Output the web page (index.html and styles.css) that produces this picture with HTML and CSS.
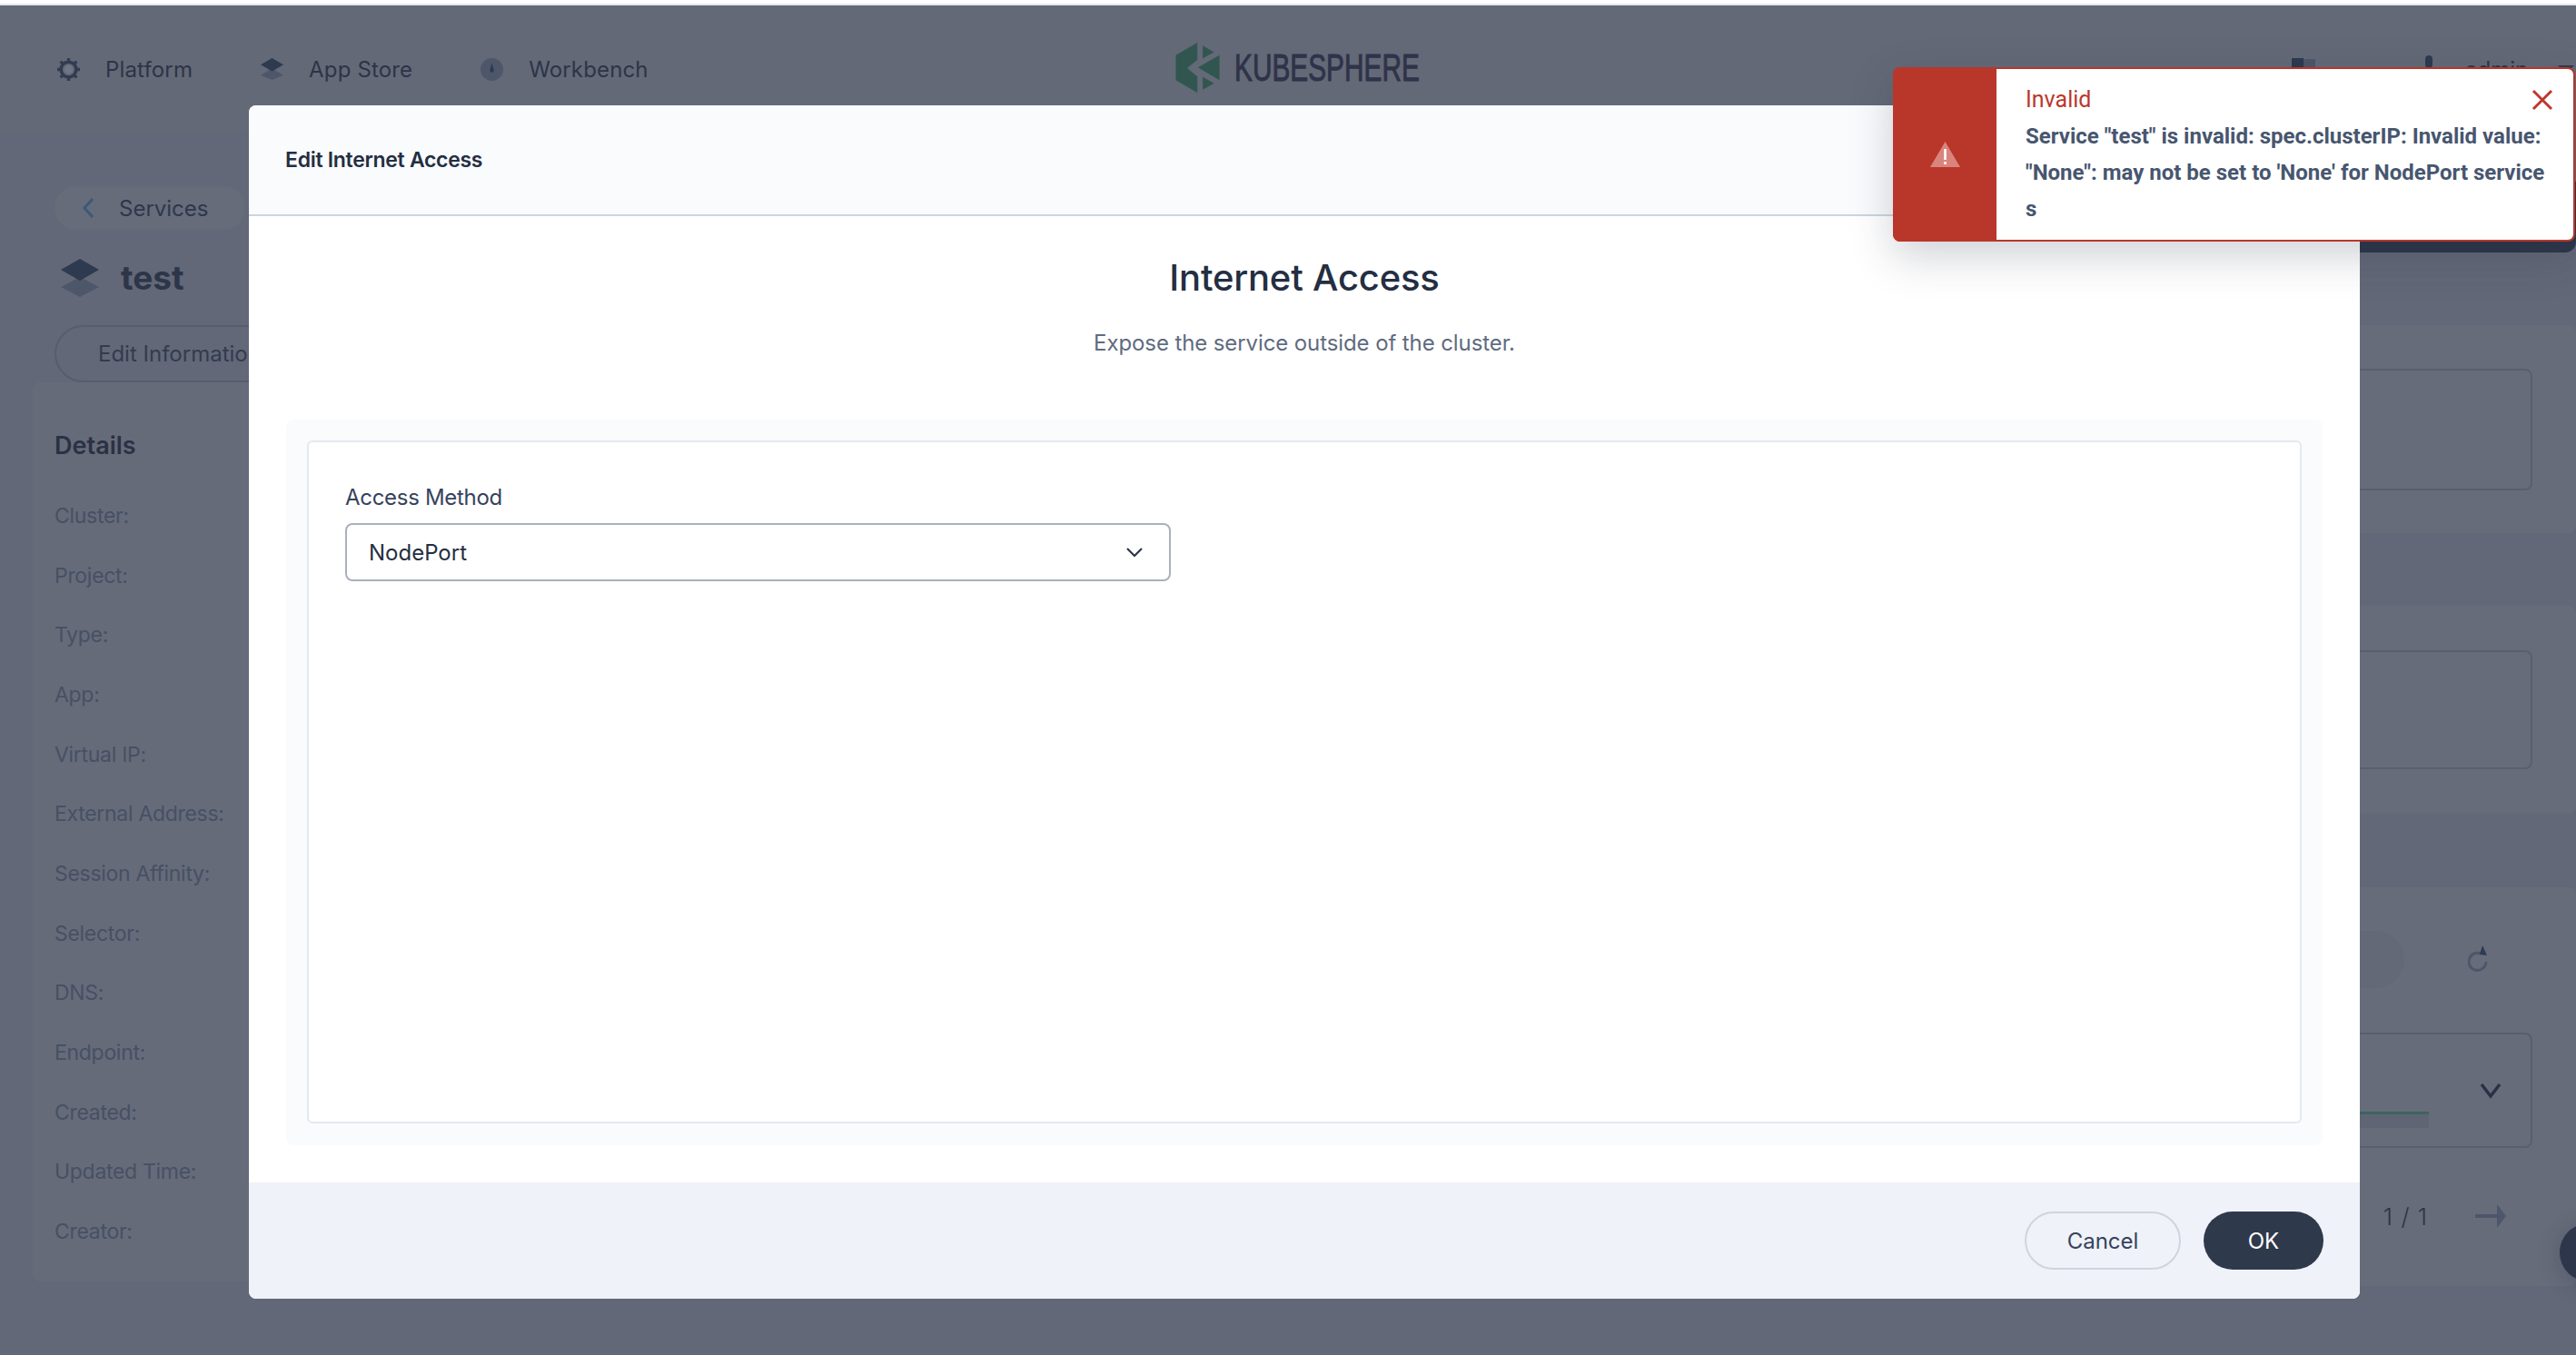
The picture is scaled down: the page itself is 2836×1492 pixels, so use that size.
FILE: index.html
```html
<!DOCTYPE html>
<html lang="en">
<head>
<meta charset="utf-8">
<title>Edit Internet Access</title>
<link rel="stylesheet" href="styles.css">
</head>
<body>
<div class="topline"></div>
<div class="app">
  <header class="nav">
    <div class="nav-left">
      <a class="nav-item">
        <svg class="nav-icon" viewBox="0 0 24 24"><circle cx="12" cy="12" r="8" fill="none" stroke="#333c50" stroke-width="3.400"/><circle cx="12" cy="12" r="4.500" fill="#6f7686"/><g stroke="#333c50" stroke-width="3.200"><path d="M12 0v5M12 19v5M0 12h5M19 12h5M3.500 3.500l3.500 3.500M17 17l3.500 3.500M3.500 20.500l3.500-3.500M17 7l3.500-3.500"/></g></svg>
        <span>Platform</span>
      </a>
      <a class="nav-item">
        <svg class="nav-icon" viewBox="0 0 24 24"><path d="M12 12l12 7-12 5-12-5z" fill="#4e566a" transform="translate(0 -1)"/><path d="M12 0l12 7-12 7-12-7z" fill="#2d3a50"/></svg>
        <span>App Store</span>
      </a>
      <a class="nav-item">
        <svg class="nav-icon" viewBox="0 0 24 24"><circle cx="12" cy="12" r="12" fill="#4e566a"/><path d="M12 5l2 7a2.200 2.200 0 1 1-4 0z" fill="#2d3a50"/></svg>
        <span>Workbench</span>
      </a>
    </div>
    <div class="logo">
      <svg class="logo-mark" viewBox="282 80 146 167"><path d="M354 80L282 122V205L354 247V193L320 165L354 138Z" fill="#30564f"/><path d="M372 90L410 112L372 132Z M428 122L356 163L428 205Z M372 195L410 216L372 237Z" fill="#30564f"/></svg>
      <span class="logo-text">KUBESPHERE</span>
    </div>
    <div class="nav-right">
      <svg class="doc-icon" viewBox="0 0 26 24"><rect width="13" height="24" fill="#2d3a50"/><rect x="13" y="1" width="13" height="23" fill="#4e566a"/></svg>
      <span class="user-head"></span>
      <span class="user-name">admin</span>
      <span class="caret"></span>
    </div>
  </header>

  <div class="content">
    <aside class="side">
      <div class="back"><svg class="back-icon" viewBox="0 0 14 24"><path d="M12 2L3 12l9 10" fill="none" stroke="#39597a" stroke-width="3"/></svg><span>Services</span></div>
      <div class="title-row">
        <svg class="title-icon" viewBox="0 0 42 42"><path d="M21 20l21 11-21 11L0 31z" fill="#4e566a"/><path d="M21 0l21 12-21 12L0 12z" fill="#2d3a50"/></svg>
        <h1 class="title">test</h1>
      </div>
      <div class="edit-btn">Edit Information</div>
      <section class="details">
        <h2 class="details-title">Details</h2>
        <div class="row">Cluster:</div>
        <div class="row">Project:</div>
        <div class="row">Type:</div>
        <div class="row">App:</div>
        <div class="row">Virtual IP:</div>
        <div class="row">External Address:</div>
        <div class="row">Session Affinity:</div>
        <div class="row">Selector:</div>
        <div class="row">DNS:</div>
        <div class="row">Endpoint:</div>
        <div class="row">Created:</div>
        <div class="row">Updated Time:</div>
        <div class="row">Creator:</div>
      </section>
    </aside>
    <main class="main">
      <div class="banner"></div>
      <section class="panel"><div class="box"></div></section>
      <section class="panel"><div class="box box-second"></div></section>
      <section class="panel panel-pods">
        <div class="toolbar">
          <div class="search"></div>
          <svg class="refresh" viewBox="0 0 24 32"><path d="M15 9.500A9.500 9.500 0 1 0 20 18" fill="none" stroke="#4e566a" stroke-width="3"/><path d="M16 0l5 11-8-1z" fill="#2d3a50"/></svg>
        </div>
        <div class="pod">
          <div class="pod-meter"></div>
          <svg class="pod-chevron" viewBox="0 0 24 20"><path d="M2 3l10 13L22 3" fill="none" stroke="#2b3144" stroke-width="3.500"/></svg>
        </div>
        <div class="pager">
          <span>1 / 1</span>
          <svg class="pager-arrow" viewBox="0 0 34 26"><rect y="11" width="26" height="4" fill="#4e566a"/><path d="M24 0l10 13-10 13z" fill="#4e566a"/></svg>
        </div>
      </section>
    </main>
  </div>
  <div class="float-help"></div>
</div>

<div class="modal">
  <div class="modal-head">Edit Internet Access</div>
  <div class="modal-body">
    <h2 class="modal-title">Internet Access</h2>
    <p class="modal-desc">Expose the service outside of the cluster.</p>
    <div class="form-wrap">
      <div class="form-card">
        <label class="form-label">Access Method</label>
        <div class="select">
          <span>NodePort</span>
          <svg class="select-arrow" viewBox="0 0 20 12"><path d="M2 2l8 8 8-8" fill="none" stroke="#2b3548" stroke-width="2.200"/></svg>
        </div>
      </div>
    </div>
  </div>
  <div class="modal-foot">
    <button class="btn btn-cancel">Cancel</button>
    <button class="btn btn-ok">OK</button>
  </div>
</div>

<div class="toast">
  <div class="toast-side">
    <svg class="toast-icon" viewBox="0 0 33 28"><path d="M16.500 0L33 28H0z" fill="#d9857d"/><rect x="15.200" y="8" width="2.600" height="12" fill="#fff"/><rect x="15.200" y="22" width="2.600" height="3" fill="#fff"/></svg>
  </div>
  <div class="toast-body">
    <div class="toast-title">Invalid</div>
    <div class="toast-msg">Service "test" is invalid: spec.clusterIP: Invalid value:<br>"None": may not be set to 'None' for NodePort service<br>s</div>
  </div>
  <svg class="toast-close" viewBox="0 0 24 24"><path d="M2 2l20 20M22 2L2 22" fill="none" stroke="#bd382c" stroke-width="3"/></svg>
</div>
</body>
</html>
```
FILE: styles.css
```css
* { box-sizing: border-box; }
html, body { margin: 0; height: 100%; }
body {
  position: relative;
  overflow: hidden;
  background: #fff;
  font-family: Inter, "Liberation Sans", sans-serif;
  color: #2b3144;
}
.topline { height: 6px; background: #fff; border-bottom: 2px solid #e6e7e8; }
.app { position: relative; height: 1486px; background: #626877; overflow: hidden; }

.nav {
  display: grid;
  grid-template-columns: 1231px 269px 1fr;
  align-items: center;
  height: 140px;
  padding-left: 63px;
  background: #636977;
}
.nav-left { display: flex; gap: 76px; }
.nav-item { display: flex; align-items: center; gap: 28px; margin-right: -1px; font-size: 24px; letter-spacing: .15px; color: #2d3448; }
.nav-icon { width: 25px; height: 25px; flex: none; }
.logo { display: flex; align-items: center; gap: 16px; margin-top: -3px; color: #2f3349; }
.logo-mark { width: 49px; height: 55px; flex: none; }
.logo-text {
  display: inline-block; width: 204px; white-space: nowrap;
  font-family: "Liberation Sans", sans-serif; font-size: 42px; line-height: 1;
  -webkit-text-stroke: 1px #2f3349;
  transform: scaleX(.71); transform-origin: left center;
}
.nav-right { display: flex; align-items: center; padding-left: 960px; }
.doc-icon { width: 26px; height: 24px; flex: none; }
.user-head { width: 8px; height: 14px; margin: -17px 0 0 121px; background: #2d3a50; border-radius: 4px; flex: none; }
.user-name { margin-left: 36px; font-size: 24px; color: #2d3448; }
.caret { margin-left: 33px; width: 0; height: 0; border: 9px solid transparent; border-top-color: #2d3a50; border-bottom: 0; }

.content { display: grid; grid-template-columns: 540px 1fr; }
.side { padding: 59px 0 0 36px; }
.back {
  display: flex; align-items: center; gap: 27px;
  width: 210px; height: 48px; margin-left: 24px; padding-left: 30px;
  border-radius: 24px; background: #666c7a; font-size: 24px; color: #2f374c;
}
.back-icon { width: 14px; height: 24px; }
.title-row { display: flex; align-items: center; gap: 24px; margin: 32px 0 0 31px; height: 42px; }
.title-icon { width: 42px; height: 42px; }
.title { margin: 0; font-size: 37px; line-height: 42px; font-weight: 700; color: #2d3549; }
.edit-btn {
  height: 63px; width: 320px; margin: 31px 0 0 24px; padding-left: 46px;
  border: 2px solid #565d6e; border-radius: 32px; line-height: 59px;
  font-size: 24px; color: #333b4f;
}
.details { height: 990px; padding: 54px 0 0 24px; background: #656b79; border-radius: 8px; }
.details-title { margin: 0 0 29px; font-size: 27px; line-height: 32px; font-weight: 600; color: #2b3144; }
.row { height: 65.67px; line-height: 65.67px; font-size: 23px; letter-spacing: -.3px; color: #475064; }

.main { padding-top: 54px; }
.banner { height: 78px; background: #2d364a; border-radius: 0 0 12px 12px; margin-bottom: 80px; }
.panel { height: 229px; padding: 48px 48px 47px 0; background: #666c7a; border-radius: 8px; margin-bottom: 80px; }
.box { height: 134px; border: 2px solid #595f70; border-radius: 8px; }
.box-second { height: 131px; margin-top: 1px; }
.panel + .panel { margin-bottom: 81px; }
.panel-pods { height: 439px; padding: 48px 48px 0 0; }
.toolbar { display: flex; align-items: center; justify-content: flex-end; height: 63px; gap: 70px; padding-right: 47px; }
.search { width: 400px; height: 63px; border-radius: 32px; background: #636977; }
.refresh { width: 24px; height: 32px; }
.pod { position: relative; display: flex; justify-content: flex-end; align-items: center; height: 127px; margin-top: 49px; padding-right: 32px; border: 2px solid #595f70; border-radius: 8px; }
.pod-meter { position: absolute; left: 0; right: 112px; top: 85px; height: 18px; background: #5f6574; border-top: 3px solid #3c6460; }
.pod-chevron { width: 24px; height: 20px; }
.pager { display: flex; align-items: center; justify-content: flex-end; gap: 52px; height: 30px; margin-top: 60px; padding-right: 29px; font-size: 26px; letter-spacing: 1px; color: #2d3448; font-weight: 300; }
.pager-arrow { width: 34px; height: 26px; }
.float-help { position: absolute; left: 2818px; top: 1341px; width: 64px; height: 64px; border-radius: 50%; background: #2d364a; box-shadow: 0 4px 24px rgba(40,50,70,.3); }

.modal {
  position: absolute; left: 274px; top: 116px; width: 2324px; height: 1314px;
  display: flex; flex-direction: column;
  border-radius: 8px; overflow: hidden; background: #fff;
}
.modal-head {
  flex: none; height: 122px; padding-left: 40px;
  background: #f9fbfd; border-bottom: 2px solid #cdd5df;
  font-size: 23px; letter-spacing: -.3px; font-weight: 600; line-height: 120px; color: #242e42;
}
.modal-body { flex: 1; display: flex; flex-direction: column; min-height: 0; }
.modal-title { margin: 44px 0 0; text-align: center; font-size: 40px; letter-spacing: -.2px; line-height: 48px; font-weight: 500; color: #242e42; }
.modal-desc { margin: 26px 0 0; text-align: center; font-size: 24px; letter-spacing: -.1px; line-height: 44px; color: #5f6b80; }
.form-wrap { flex: 1; margin: 62px 41px 41px; padding: 23px 23px 24px; background: #f9fbfd; border-radius: 8px; }
.form-card { height: 100%; padding: 45px 40px; background: #fff; border: 2px solid #e3e9ef; border-radius: 6px; }
.form-label { display: block; font-size: 24px; letter-spacing: -.3px; line-height: 32px; color: #36435c; margin-bottom: 12px; }
.select {
  display: flex; align-items: center; justify-content: space-between;
  width: 909px; height: 64px; padding: 0 28px 0 24px;
  border: 2px solid #abb0bc; border-radius: 8px; font-size: 24px; color: #242e42;
}
.select-arrow { width: 20px; height: 12px; }
.modal-foot { flex: none; display: flex; justify-content: flex-end; align-items: center; gap: 25px; height: 128px; padding-right: 40px; background: #eff2f8; }
.btn { height: 64px; border-radius: 32px; font-family: inherit; font-size: 24px; }
.btn-cancel { width: 172px; background: transparent; border: 2px solid #d0d4dc; color: #36435c; }
.btn-ok { width: 132px; background: #2f394c; border: 0; color: #fff; }

.toast {
  position: absolute; left: 2084px; top: 74px; width: 751px; height: 192px;
  display: flex; background: #fff;
  border: 2px solid #b9362a; border-radius: 8px;
  box-shadow: 0 16px 48px rgba(36,46,66,.22);
}
.toast-side { flex: none; width: 114px; margin: -2px 0 -2px -2px; display: flex; align-items: center; justify-content: center; background: #b9362a; border-radius: 8px 0 0 8px; }
.toast-icon { width: 33px; height: 28px; }
.toast-body { padding: 16px 0 0 32px; font-family: Roboto, "Liberation Sans", sans-serif; font-size: 24px; }
.toast-title { font-size: 25px; line-height: 36px; color: #bc382c; }
.toast-msg { margin-top: 2px; line-height: 40px; font-weight: 700; color: #47566f; white-space: nowrap; }
.toast-close { position: absolute; right: 22px; top: 22px; width: 24px; height: 24px; }
```
